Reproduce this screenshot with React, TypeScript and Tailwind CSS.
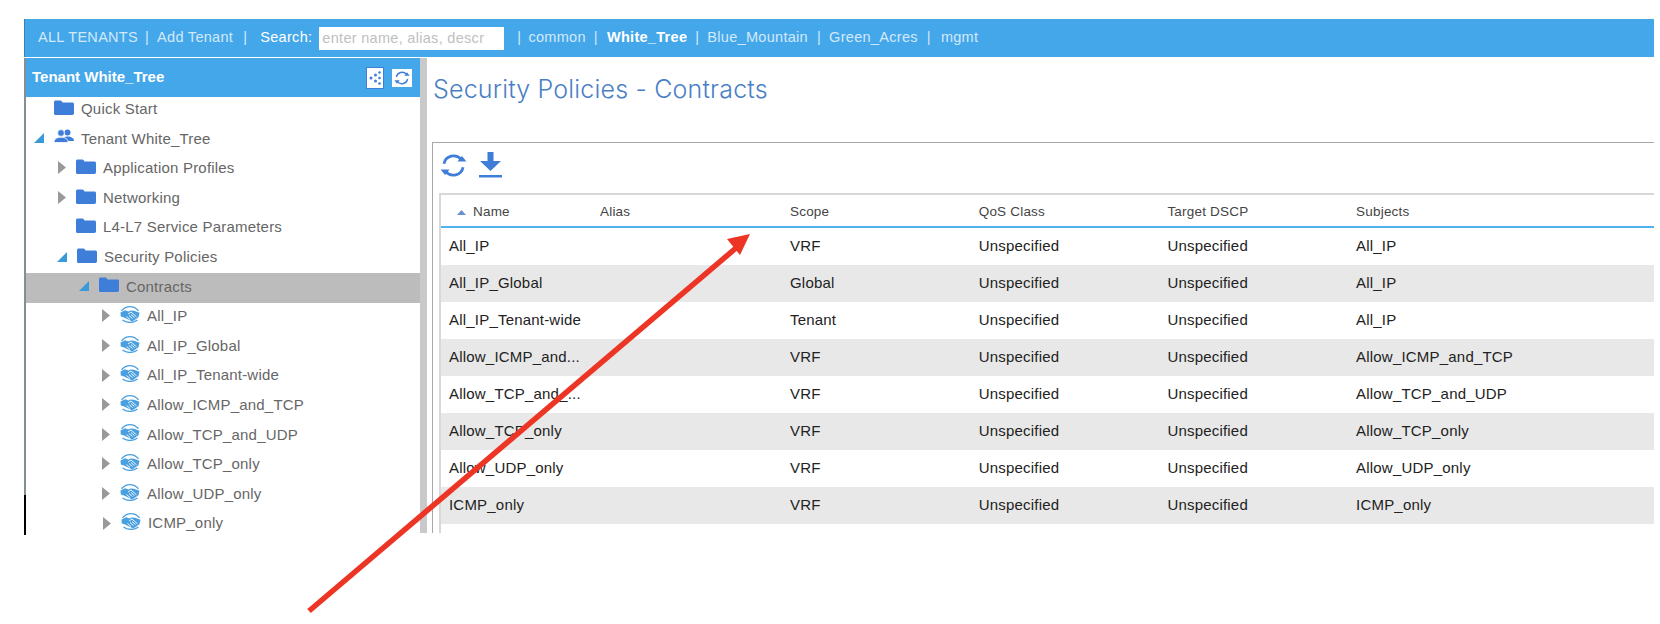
import { clsx } from 'clsx';

const sans = 'font-["Liberation_Sans",Arial,sans-serif]';

function Folder() {
  return (
    <svg width="20" height="15" viewBox="0 0 20 15" className="mb-[6px] shrink-0">
      <path d="M0 2.2C0 1.2.7.5 1.7.5h4.6c.7 0 1.2.3 1.6.9l.6 1h9.8c1 0 1.7.7 1.7 1.7v9.2c0 1-.7 1.7-1.7 1.7H1.2C.5 15 0 14.5 0 13.8z" fill="#3f7ed8" />
    </svg>
  );
}

function People() {
  return (
    <svg width="20" height="15" viewBox="0 0 20 15" className="mb-[6px] shrink-0">
      <circle cx="13.5" cy="3.6" r="3" fill="#3f7ed8" />
      <path d="M8 12c0-3 2-4.600 5.500-4.600S20 9 20 12z" fill="#3f7ed8" />
      <circle cx="7" cy="4" r="3.400" fill="#3f7ed8" stroke="#fff" strokeWidth=".8" />
      <path d="M0 13.500c0-3.600 2.600-5.200 7-5.200s7 1.600 7 5.200z" fill="#3f7ed8" stroke="#fff" strokeWidth=".8" />
    </svg>
  );
}

function Handshake() {
  return (
    <svg width="20" height="17" viewBox="0 0 20 17" fill="none" className="mb-[6px] shrink-0">
      <path d="M1.500 4.800C4.500 1.400 7.500.7 10 .7s5.500.7 8.500 4.100" stroke="#4a9fe0" strokeWidth="1.300" />
      <path d="M2.500 14C5 15.800 7.500 16.400 10 16.400s5-.6 7.500-2.400" stroke="#4a9fe0" strokeWidth="1.300" />
      <path d="M.5 6.500 5 4.300l3.500 1.200 2-1 3.500.3 5.500 2-1 4.500-5.500 3.600c-.8.500-1.600.3-2.200-.1L4 11.500.8 10.500z" fill="#4a9fe0" />
      <path d="m8 8 3-2 5.500 4.800M6.500 10.500l3.500 3M9 9.500l3.500 3M11 8.500l3.500 3" stroke="#fff" strokeWidth=".9" />
    </svg>
  );
}

function ArrowRight() {
  return (
    <svg width="8" height="13" viewBox="0 0 8 13" className="mb-[3px] ml-[3px]">
      <path d="M0 0 8 6.500 0 13z" fill="#999" />
    </svg>
  );
}

function ArrowOpen() {
  return (
    <svg width="10" height="10" viewBox="0 0 10 10" className="mb-[3px] ml-[1px]">
      <path d="M10 0v10H0z" fill="#3a9ad9" />
    </svg>
  );
}

function Refresh({ size, color, width }: { size: number; color: string; width: number }) {
  return (
    <svg width={size} height={size} viewBox="0 0 24 24" fill="none">
      <path d="M3.500 10.500A8.800 8.800 0 0 1 18.800 6.500" stroke={color} strokeWidth={width} />
      <path d="M20.500 13.500A8.800 8.800 0 0 1 5.200 17.500" stroke={color} strokeWidth={width} />
      <path d="M15.500 8.500h8l-4-5z" fill={color} />
      <path d="M8.500 15.500h-8l4 5z" fill={color} />
    </svg>
  );
}

const tree = [
  { label: 'Quick Start', pad: 'pl-[7px]', arrow: null, icon: 'folder' },
  { label: 'Tenant White_Tree', pad: 'pl-[7px]', arrow: 'open', icon: 'people' },
  { label: 'Application Profiles', pad: 'pl-[29px]', arrow: 'right', icon: 'folder' },
  { label: 'Networking', pad: 'pl-[29px]', arrow: 'right', icon: 'folder' },
  { label: 'L4-L7 Service Parameters', pad: 'pl-[29px]', arrow: null, icon: 'folder' },
  { label: 'Security Policies', pad: 'pl-[30px]', arrow: 'open', icon: 'folder' },
  { label: 'Contracts', pad: 'pl-[52px]', arrow: 'open', icon: 'folder', active: true },
  { label: 'All_IP', pad: 'pl-[73px]', arrow: 'right', icon: 'shake' },
  { label: 'All_IP_Global', pad: 'pl-[73px]', arrow: 'right', icon: 'shake' },
  { label: 'All_IP_Tenant-wide', pad: 'pl-[73px]', arrow: 'right', icon: 'shake' },
  { label: 'Allow_ICMP_and_TCP', pad: 'pl-[73px]', arrow: 'right', icon: 'shake' },
  { label: 'Allow_TCP_and_UDP', pad: 'pl-[73px]', arrow: 'right', icon: 'shake' },
  { label: 'Allow_TCP_only', pad: 'pl-[73px]', arrow: 'right', icon: 'shake' },
  { label: 'Allow_UDP_only', pad: 'pl-[73px]', arrow: 'right', icon: 'shake' },
  { label: 'ICMP_only', pad: 'pl-[74px]', arrow: 'right', icon: 'shake' },
];

const rows = [
  ['All_IP', 'VRF', 'All_IP'],
  ['All_IP_Global', 'Global', 'All_IP'],
  ['All_IP_Tenant-wide', 'Tenant', 'All_IP'],
  ['Allow_ICMP_and...', 'VRF', 'Allow_ICMP_and_TCP'],
  ['Allow_TCP_and_...', 'VRF', 'Allow_TCP_and_UDP'],
  ['Allow_TCP_only', 'VRF', 'Allow_TCP_only'],
  ['Allow_UDP_only', 'VRF', 'Allow_UDP_only'],
  ['ICMP_only', 'VRF', 'ICMP_only'],
];

const cols = 'grid grid-cols-[151px_190px_188.700px_188.700px_188.700px_1fr]';

function Sep({ className }: { className: string }) {
  return <span className={className}>|</span>;
}

export default function App() {
  return (
    <div className={clsx('relative h-[624px] w-[1654px] overflow-hidden bg-white pl-[24px] pt-[19px]', sans)}>
      {/* Top bar */}
      <div className="flex h-[38px] items-center border-l border-[#3a7fb5] bg-[#44a7ea] text-[14.500px] tracking-[0.3px] text-[#d3e9fa]">
        <span className="ml-[13px]">ALL TENANTS</span>
        <Sep className="ml-[7px]" />
        <span className="ml-[8px]">Add Tenant</span>
        <Sep className="ml-[10px]" />
        <span className="ml-[13px] text-white">Search:</span>
        <input
          readOnly
          placeholder="enter name, alias, descr"
          className="ml-[7px] h-[23px] w-[185px] bg-white px-[3px] text-[14.500px] tracking-[0.3px] outline-none placeholder:text-[#c0c0c0]"
        />
        <Sep className="ml-[13px]" />
        <span className="ml-[7px]">common</span>
        <Sep className="ml-[8px]" />
        <span className="ml-[9px] font-bold text-white">White_Tree</span>
        <Sep className="ml-[8px]" />
        <span className="ml-[8px]">Blue_Mountain</span>
        <Sep className="ml-[9px]" />
        <span className="ml-[8px]">Green_Acres</span>
        <Sep className="ml-[9px]" />
        <span className="ml-[10px]">mgmt</span>
      </div>

      <div className="mt-px flex h-[477px] items-start">
        {/* Left edge */}
        <div className="flex w-[2px] flex-col">
          <div className="h-[437px] bg-[#858f93]" />
          <div className="h-[40px] bg-black" />
        </div>

        {/* Tree panel */}
        <div className="h-[475px] w-[394px] overflow-hidden">
          <div className="flex h-[39px] items-center justify-between bg-[#44a7ea] pl-[6px] pr-[8px]">
            <span className="mb-px text-[15px] font-bold text-white">Tenant White_Tree</span>
            <div className="flex items-center gap-[8px]">
              <div className="flex h-[22px] w-[18px] items-center justify-center border border-[#3f7ed8] bg-white">
                <svg width="12" height="14" viewBox="0 0 12 14" fill="#3f7ed8">
                  <circle cx="2" cy="7" r="1.500" />
                  <circle cx="6.500" cy="4" r="1.500" />
                  <circle cx="6.500" cy="10" r="1.500" />
                  <circle cx="10.500" cy="1.500" r="1.300" />
                  <circle cx="10.500" cy="7" r="1.300" />
                  <circle cx="10.500" cy="12.500" r="1.300" />
                </svg>
              </div>
              <div className="flex h-[18px] w-[20px] items-center justify-center bg-white">
                <Refresh size={16} color="#3f7ed8" width={2} />
              </div>
            </div>
          </div>
          <div className="-mt-[1.500px]">
            {tree.map(item => (
              <div
                key={item.label}
                className={clsx('flex h-[29.600px] items-center text-[15px] tracking-[0.2px] text-[#666]', item.pad, item.active && 'bg-[#bcbcbc]')}
              >
                <div className="flex w-[21px] shrink-0 items-center">
                  {item.arrow === 'open' && <ArrowOpen />}
                  {item.arrow === 'right' && <ArrowRight />}
                </div>
                {item.icon === 'folder' && <Folder />}
                {item.icon === 'people' && <People />}
                {item.icon === 'shake' && <Handshake />}
                <span className="ml-[7px] mb-[2px]">{item.label}</span>
              </div>
            ))}
          </div>
        </div>

        {/* Splitter */}
        <div className="h-[475px] w-[7px] bg-[#c9c9c9]" />

        {/* Content */}
        <div className="flex h-[475px] flex-1 flex-col">
          <div className="h-[84px] pl-[6px] pt-[13px] font-[Inter,sans-serif] text-[25px] font-light leading-[36px] tracking-[0.180px] text-[#4a80c4]">
            Security Policies - Contracts
          </div>
          <div className="ml-[5px] flex-1 border-l border-t border-[#a8a8a8]">
            <div className="flex h-[50px] items-center pb-[6px] pl-[7px]">
              <Refresh size={27} color="#3f7ed8" width={2.500} />
              <svg width="23" height="26" viewBox="0 0 23 26" className="ml-[12px]">
                <path d="M8.500 0h6v9H22L11.500 19 1 9h7.500z" fill="#3f7ed8" />
                <rect y="23" width="23" height="2.500" fill="#3f7ed8" />
              </svg>
            </div>
            <div className="ml-[6px] h-[340px] border-l-2 border-t-2 border-[#d8d8d8]">
              <div className={clsx(cols, 'h-[33px] items-center border-b-2 border-[#4eb3ee] pt-[3px] text-[13.500px] tracking-[0.2px] text-[#444]')}>
                <div className="flex items-center pl-[16px]">
                  <svg width="9" height="5" viewBox="0 0 9 5">
                    <path d="M4.500 0 9 5H0z" fill="#6a8fd0" />
                  </svg>
                  <span className="ml-[7px]">Name</span>
                </div>
                <div className="pl-[8px]">Alias</div>
                <div className="pl-[8px]">Scope</div>
                <div className="pl-[8px]">QoS Class</div>
                <div className="pl-[8px]">Target DSCP</div>
                <div className="pl-[8px]">Subjects</div>
              </div>
              {rows.map((row, i) => (
                <div
                  key={row[0]}
                  className={clsx(cols, 'h-[37px] items-center text-[15px] tracking-[0.2px] text-[#222]', i % 2 === 1 && 'bg-[#e8e8e8]')}
                >
                  <div className="pl-[8px]">{row[0]}</div>
                  <div />
                  <div className="pl-[8px]">{row[1]}</div>
                  <div className="pl-[8px]">Unspecified</div>
                  <div className="pl-[8px]">Unspecified</div>
                  <div className="pl-[8px]">{row[2]}</div>
                </div>
              ))}
            </div>
          </div>
        </div>
      </div>

      {/* Red annotation arrow */}
      <svg width="1654" height="624" viewBox="0 0 1654 624" className="pointer-events-none absolute left-0 top-0">
        <path d="M309 611 736 248" stroke="#ec3524" strokeWidth="5.500" />
        <path d="M750 234 727 239 740 255z" fill="#ec3524" />
      </svg>
    </div>
  );
}
